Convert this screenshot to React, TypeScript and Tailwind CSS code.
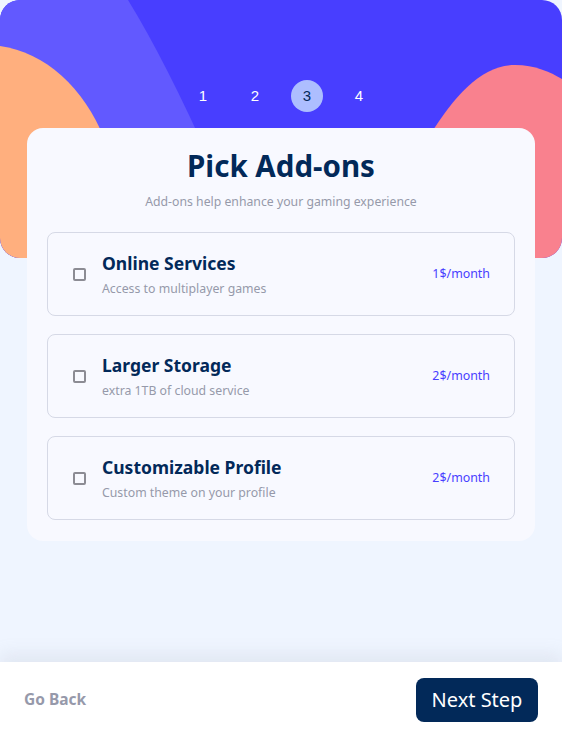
import React, { useState } from 'react';

const addons = [
  { title: 'Online Services', desc: 'Access to multiplayer games', price: '1$/month' },
  { title: 'Larger Storage', desc: 'extra 1TB of cloud service', price: '2$/month' },
  { title: 'Customizable Profile', desc: 'Custom theme on your profile', price: '2$/month' },
];

function Banner() {
  return (
    <svg className="absolute inset-0 h-full w-full" viewBox="0 0 562 258" preserveAspectRatio="none">
      <path d="M0 0 H128 Q165 60 212 165 L212 258 L0 258 Z" fill="#6259FF" />
      <path d="M0 46 C45 52 84 88 104 138 L112 258 L0 258 Z" fill="#FFAF7E" />
      <path d="M430 135 C455 95 482 65 515 65 C535 65 550 72 562 79 L562 258 L430 258 Z" fill="#F9818E" />
    </svg>
  );
}

export default function App() {
  const [checked, setChecked] = useState<boolean[]>([false, false, false]);

  const toggle = (i: number) => {
    setChecked(prev => prev.map((v, idx) => (idx === i ? !v : v)));
  };

  return (
    <div className="flex h-[738px] w-full flex-col bg-[#eff5ff] font-['Noto_Sans',sans-serif]">
      <div className="flex-1">
        {/* header with steps */}
        <div className="relative h-[258px] overflow-hidden rounded-[20px] bg-[#483EFF]">
          <Banner />
          <div className="relative flex justify-center gap-[20px] pt-[80px] font-['Liberation_Sans',sans-serif] text-[15px]">
            {[1, 2, 3, 4].map(n => (
              <div
                key={n}
                className={`flex h-[32px] w-[32px] items-center justify-center rounded-full ${
                  n === 3 ? 'bg-[#ADBEFF] text-[#022959]' : 'text-white'
                }`}
              >
                {n}
              </div>
            ))}
          </div>
        </div>

        {/* card */}
        <div className="relative z-10 mx-[27px] -mt-[130px] rounded-[16px] bg-[#F8F9FF] px-[20px] pb-[21px] pt-[20px]">
          <h1 className="text-center text-[29.5px] font-bold leading-[36px] text-[#022959]">Pick Add-ons</h1>
          <p className="mt-[8px] text-center text-[12.25px] leading-[20px] text-[#9699AA]">
            Add-ons help enhance your gaming experience
          </p>
          <div className="mt-[20px] flex flex-col gap-[18px]">
            {addons.map((a, i) => (
              <label
                key={a.title}
                className="flex h-[84px] cursor-pointer items-center rounded-[8px] border border-[#D6D9E6] pl-[25px] pr-[24px]"
              >
                <span
                  onClick={() => toggle(i)}
                  className={`h-[13px] w-[13px] shrink-0 rounded-[2px] border-2 ${
                    checked[i] ? 'border-[#483EFF] bg-[#483EFF]' : 'border-[#8C8C94]'
                  }`}
                />
                <div className="ml-[16px] flex flex-1 flex-col pt-[2px]">
                  <span className="text-[17.5px] font-bold leading-[22px] text-[#022959]">{a.title}</span>
                  <span className="mt-[6px] text-[12.3px] leading-[18px] text-[#9699AA]">{a.desc}</span>
                </div>
                <span className="text-[12.4px] text-[#483EFF]">{a.price}</span>
              </label>
            ))}
          </div>
        </div>
      </div>

      {/* footer */}
      <div className="flex h-[76px] items-center justify-between bg-white px-[24px] shadow-[0_-8px_16px_rgba(150,153,170,0.15)]">
        <button className="text-[15.5px] font-bold text-[#9699AA]">Go Back</button>
        <button className="h-[44px] w-[122px] rounded-[8px] bg-[#022959] text-[20px] text-white">Next Step</button>
      </div>
    </div>
  );
}
